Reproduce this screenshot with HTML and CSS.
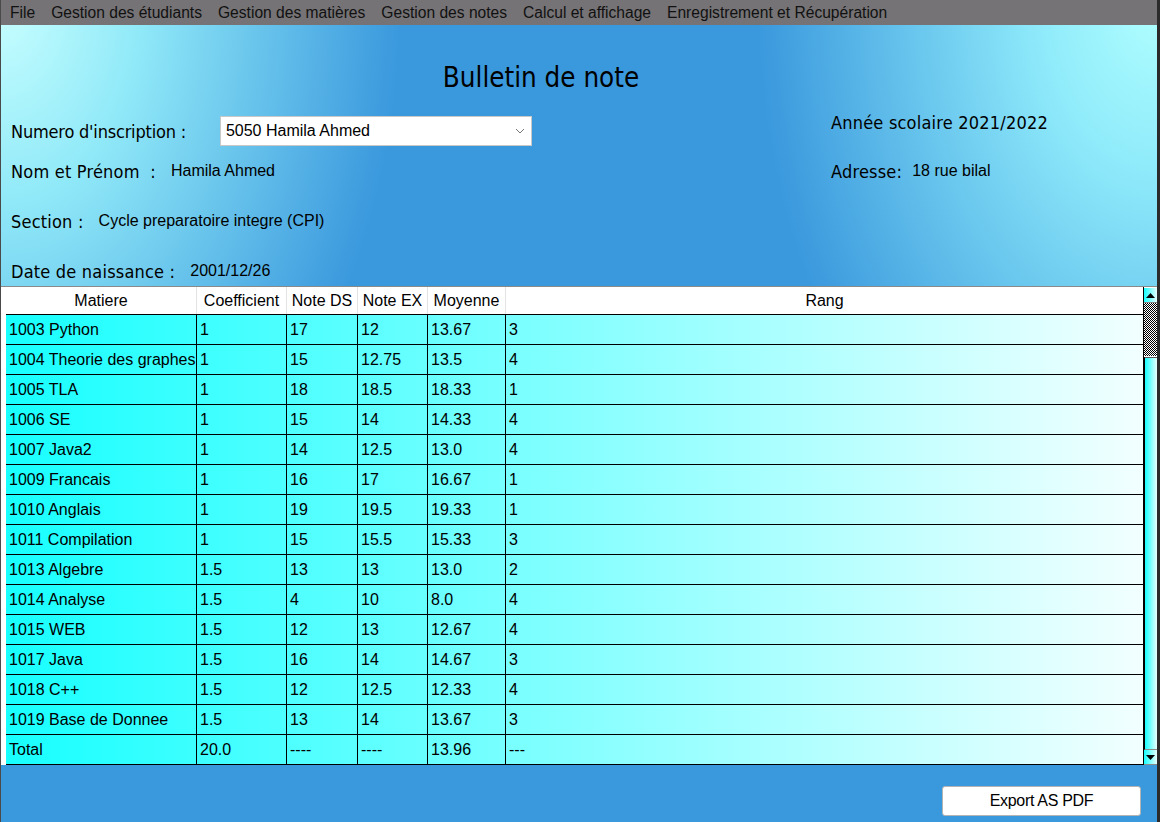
FILE: index.html
```html
<!DOCTYPE html>
<html lang="fr">
<head>
  <meta charset="UTF-8">
  <title>Bulletin de note</title>
  <link rel="stylesheet" href="styles.css">
</head>
<body>
  <div class="window">
    <div class="menubar">
      <span>File</span>
      <span>Gestion des étudiants</span>
      <span>Gestion des matières</span>
      <span>Gestion des notes</span>
      <span>Calcul et affichage</span>
      <span>Enregistrement et Récupération</span>
    </div>

    <div class="header">
      <h1 class="title">Bulletin de note</h1>
      <div class="info">
        <div class="info-left">
          <div class="field first">
            <span class="label narrow">Numero d'inscription :</span>
            <div class="combo">
              <span>5050 Hamila Ahmed</span>
              <svg width="10" height="6" viewBox="0 0 10 6"><polyline points="1,1 5,5 9,1" fill="none" stroke="#777" stroke-width="1"/></svg>
            </div>
          </div>
          <div class="field second">
            <span class="label">Nom et Prénom&nbsp; :</span>
            <span class="value">Hamila Ahmed</span>
          </div>
          <div class="field third">
            <span class="label">Section :</span>
            <span class="value">Cycle preparatoire integre (CPI)</span>
          </div>
          <div class="field third">
            <span class="label">Date de naissance :</span>
            <span class="value">2001/12/26</span>
          </div>
        </div>
        <div class="info-right">
          <div class="field year">
            <span class="label">Année scolaire 2021/2022</span>
          </div>
          <div class="field address">
            <span class="label">Adresse:</span>
            <span class="value">18 rue bilal</span>
          </div>
        </div>
      </div>
    </div>

    <div class="table">
      <div class="rows">
        <div class="row head">
          <div>Matiere</div><div>Coefficient</div><div>Note DS</div><div>Note EX</div><div>Moyenne</div><div>Rang</div>
        </div>
        <div class="row"><div>1003 Python</div><div>1</div><div>17</div><div>12</div><div>13.67</div><div>3</div></div>
        <div class="row"><div>1004 Theorie des graphes</div><div>1</div><div>15</div><div>12.75</div><div>13.5</div><div>4</div></div>
        <div class="row"><div>1005 TLA</div><div>1</div><div>18</div><div>18.5</div><div>18.33</div><div>1</div></div>
        <div class="row"><div>1006 SE</div><div>1</div><div>15</div><div>14</div><div>14.33</div><div>4</div></div>
        <div class="row"><div>1007 Java2</div><div>1</div><div>14</div><div>12.5</div><div>13.0</div><div>4</div></div>
        <div class="row"><div>1009 Francais</div><div>1</div><div>16</div><div>17</div><div>16.67</div><div>1</div></div>
        <div class="row"><div>1010 Anglais</div><div>1</div><div>19</div><div>19.5</div><div>19.33</div><div>1</div></div>
        <div class="row"><div>1011 Compilation</div><div>1</div><div>15</div><div>15.5</div><div>15.33</div><div>3</div></div>
        <div class="row"><div>1013 Algebre</div><div>1.5</div><div>13</div><div>13</div><div>13.0</div><div>2</div></div>
        <div class="row"><div>1014 Analyse</div><div>1.5</div><div>4</div><div>10</div><div>8.0</div><div>4</div></div>
        <div class="row"><div>1015 WEB</div><div>1.5</div><div>12</div><div>13</div><div>12.67</div><div>4</div></div>
        <div class="row"><div>1017 Java</div><div>1.5</div><div>16</div><div>14</div><div>14.67</div><div>3</div></div>
        <div class="row"><div>1018 C++</div><div>1.5</div><div>12</div><div>12.5</div><div>12.33</div><div>4</div></div>
        <div class="row"><div>1019 Base de Donnee</div><div>1.5</div><div>13</div><div>14</div><div>13.67</div><div>3</div></div>
        <div class="row"><div>Total</div><div>20.0</div><div>----</div><div>----</div><div>13.96</div><div>---</div></div>
      </div>
      <div class="scroll">
        <div class="sb-btn"><svg width="9" height="5" viewBox="0 0 9 5"><polygon points="0,5 9,5 4.5,0" fill="#000"/></svg></div>
        <div class="thumb"></div>
        <div class="track"></div>
        <div class="sb-btn"><svg width="9" height="5" viewBox="0 0 9 5"><polygon points="0,0 9,0 4.5,5" fill="#000"/></svg></div>
      </div>
    </div>

    <div class="footer">
      <button class="export">Export AS PDF</button>
    </div>
  </div>
</body>
</html>
```

FILE: styles.css
```css
body {
  margin: 0;
  font-family: "Liberation Sans", Arial, sans-serif;
  color: #000;
}
.window {
  width: 1156px;
  height: 822px;
  border-left: 1px solid #4a4a4a;
  border-right: 3px solid #2b2b2b;
  background:
    radial-gradient(ellipse 400px 580px at 0 0, #c8ffff 0%, #90e9f8 35%, rgba(58, 154, 222, 0) 100%),
    radial-gradient(ellipse 400px 580px at 100% 0, #b0ffff 0%, #8eeafa 30%, rgba(58, 154, 222, 0) 100%),
    #3a98dd;
  overflow: hidden;
}
.menubar {
  height: 25px;
  background-color: #757375;
  display: flex;
  align-items: center;
  padding-left: 1px;
  font-size: 15.6px;
  color: #111;
}
.menubar span {
  padding: 0 8px;
}
.header {
  padding-top: 37px;
  height: 224px;
  font-family: "DejaVu Sans Condensed", "DejaVu Sans", sans-serif;
}
.title {
  margin: 0;
  height: 30px;
  line-height: 30px;
  font-size: 27.5px;
  font-weight: normal;
  text-align: center;
  padding-right: 76px;
}
.info {
  display: flex;
}
.info-left {
  width: 820px;
  padding-left: 10px;
}
.field {
  display: flex;
  align-items: center;
  height: 30px;
  gap: 15px;
}
.field.first {
  margin-top: 24px;
  gap: 34px;
}
.field.second {
  margin-top: 10px;
}
.field.third {
  margin-top: 20px;
}
.label {
  font-size: 18px;
  letter-spacing: 0.2px;
}
.label.narrow {
  letter-spacing: -0.2px;
}
.value {
  font-family: "Liberation Sans", Arial, sans-serif;
  font-size: 16px;
}
.combo {
  width: 299px;
  height: 28px;
  background: #fff;
  border: 1px solid #c8c8c8;
  display: flex;
  align-items: center;
  justify-content: space-between;
  padding: 0 6px 0 5px;
  font-family: "Liberation Sans", Arial, sans-serif;
  font-size: 16px;
}
.field.year {
  margin-top: 15px;
}
.field.address {
  margin-top: 19px;
  gap: 10px;
}
.table {
  display: flex;
  height: 478px;
  border-top: 1px solid #8a8a8a;
  background: #fff;
  padding-left: 5px;
}
.rows {
  flex: 1;
  border-right: 1px solid #000;
}
.row {
  display: grid;
  grid-template-columns: 191px 90px 71px 70px 78px 1fr;
  height: 30px;
  box-sizing: border-box;
  border-bottom: 1px solid #000;
  background: linear-gradient(to right, #18ffff, #f2ffff);
  font-size: 16px;
}
.row div {
  border-right: 1px solid #000;
  padding-left: 3px;
  display: flex;
  align-items: center;
  white-space: nowrap;
  overflow: hidden;
}
.row div:last-child {
  border-right: none;
}
.row.head {
  height: 28px;
  background: #fff;
}
.row.head div {
  justify-content: center;
  padding-left: 0;
  border-right-color: #e3e3e3;
}
.scroll {
  width: 13px;
  display: flex;
  flex-direction: column;
  padding-top: 1px;
}
.sb-btn {
  height: 14px;
  display: flex;
  align-items: center;
  justify-content: center;
  background: linear-gradient(to right, #18ffff, #e8ffff);
  border-bottom: 1px solid #8a8a8a;
}
.thumb {
  height: 53px;
  background: repeating-conic-gradient(#000 0 25%, #fff 0 50%) 0 0 / 2px 2px;
  border-bottom: 1px solid #fff;
}
.track {
  flex: 1;
  background: linear-gradient(to right, #18ffff, #e8ffff);
  border-left: 1px solid #000;
  border-top: 1px solid #555;
  border-bottom: 1px solid #8a8a8a;
}
.footer {
  display: flex;
  justify-content: flex-end;
  padding: 21px 16px 0 0;
}
.export {
  width: 199px;
  height: 30px;
  background: #fff;
  border: 1px solid #b4b4b4;
  border-radius: 3px;
  font-family: "Liberation Sans", Arial, sans-serif;
  font-size: 16px;
  letter-spacing: -0.3px;
  color: #000;
}
```
